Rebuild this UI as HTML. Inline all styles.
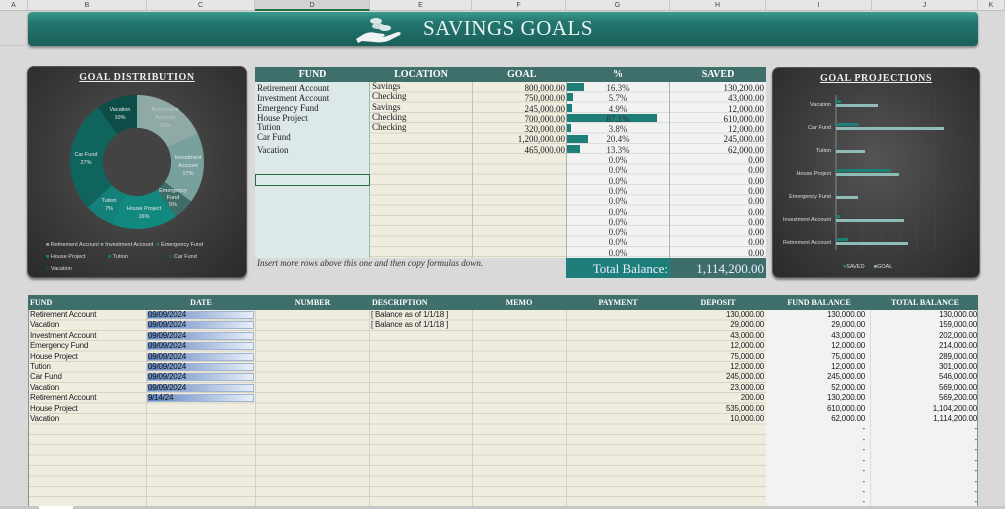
<!DOCTYPE html>
<html><head><meta charset="utf-8"><style>
*{margin:0;padding:0;box-sizing:border-box}
body{width:1005px;height:509px;overflow:hidden;background:#d9d9d9;position:relative;font-family:"Liberation Serif",serif;}
.a{position:absolute}
.hdr{position:absolute;top:0;height:11px;background:#e6e6e6;border-right:1px solid #c8c8c8;border-bottom:1px solid #bdbdbd;font:7px "Liberation Sans",sans-serif;color:#444;text-align:center;line-height:11px}
.col{position:absolute;white-space:pre;font-size:9px;color:#1a1a1a}
.bs{font-family:"Liberation Sans",sans-serif;font-size:8px;letter-spacing:-0.2px}
.th{position:absolute;color:#fff;font-weight:bold;text-align:center}
</style></head><body>
<div class="hdr" style="left:0;width:28px">A</div>
<div class="hdr" style="left:28px;width:119px">B</div>
<div class="hdr" style="left:147px;width:108px">C</div>
<div class="hdr" style="left:255px;width:115px;background:#d2d2d2;border-bottom:2px solid #217346">D</div>
<div class="hdr" style="left:370px;width:102px">E</div>
<div class="hdr" style="left:472px;width:94px">F</div>
<div class="hdr" style="left:566px;width:104px">G</div>
<div class="hdr" style="left:670px;width:96px">H</div>
<div class="hdr" style="left:766px;width:106px">I</div>
<div class="hdr" style="left:872px;width:106px">J</div>
<div class="hdr" style="left:978px;width:27px">K</div>
<div class="a" style="left:0;top:11px;width:28px;height:35px;border-bottom:1px solid #c8c8c8;border-right:1px solid #c8c8c8"></div>

<!-- banner -->
<div class="a" style="left:28px;top:12px;width:950px;height:34px;border-radius:4px;background:linear-gradient(#3a9a90,#22766f 30%,#1b5f59);box-shadow:0 2px 2px #888"></div>
<svg class="a" style="left:354px;top:15px" width="52" height="28" viewBox="0 0 52 28">
<ellipse cx="22" cy="6" rx="6" ry="3" fill="#d8e8e6"/><ellipse cx="24" cy="11" rx="6" ry="3" fill="#c8dcda"/><ellipse cx="31" cy="13" rx="6" ry="3" fill="#d8e8e6"/>
<path d="M2 24 L10 19 Q16 16 22 18 L30 19 Q32 21 28 22 L20 22 L30 22 L44 17 Q48 17 46 20 L34 26 Q28 28 20 27 L8 26 L4 28 Z" fill="#eef4f3"/></svg>
<div class="a" style="left:423px;top:15px;font-size:21px;color:#eaf4f2;letter-spacing:0.5px;line-height:26px">SAVINGS GOALS</div>

<!-- pie panel -->
<div class="a" style="left:27px;top:66px;width:220px;height:212px;border-radius:7px;background:radial-gradient(ellipse at 50% 45%,#555 0%,#3a3a3a 60%,#2a2a2a 100%);box-shadow:0 2px 2px #777;border:1px solid #555"></div>
<div class="a" style="left:27px;top:72px;width:220px;text-align:center;color:#eee;font-weight:bold;font-size:10px;text-decoration:underline;letter-spacing:0.6px">GOAL DISTRIBUTION</div>
<svg class="a" style="left:70px;top:95px" width="134" height="134" viewBox="0 0 134 134">
<g transform="rotate(-90 67 67)" fill="none" stroke-width="33">
<circle cx="67" cy="67" r="50.5" stroke="#8fa9a6" stroke-dasharray="57.1 400" stroke-dashoffset="0"/>
<circle cx="67" cy="67" r="50.5" stroke="#78a19d" stroke-dasharray="53.9 400" stroke-dashoffset="-57.1"/>
<circle cx="67" cy="67" r="50.5" stroke="#3e6d68" stroke-dasharray="15.9 400" stroke-dashoffset="-111"/>
<circle cx="67" cy="67" r="50.5" stroke="#12897f" stroke-dasharray="50.8 400" stroke-dashoffset="-126.9"/>
<circle cx="67" cy="67" r="50.5" stroke="#13807a" stroke-dasharray="22.2 400" stroke-dashoffset="-177.7"/>
<circle cx="67" cy="67" r="50.5" stroke="#0f655e" stroke-dasharray="85.7 400" stroke-dashoffset="-199.9"/>
<circle cx="67" cy="67" r="50.5" stroke="#0c4d48" stroke-dasharray="31.7 400" stroke-dashoffset="-285.6"/>
</g>
<circle cx="67" cy="67" r="34" fill="#434343"/>
<g font-family="Liberation Sans,sans-serif" font-size="5.5" fill="#e8e8e8" text-anchor="middle">
<text x="50" y="16">Vacation</text><text x="50" y="24">10%</text>
<text x="95" y="16" fill="#c0c8c8">Retirement</text><text x="95" y="24" fill="#c0c8c8">Account</text><text x="95" y="32" fill="#c0c8c8">18%</text>
<text x="118" y="64">Investment</text><text x="118" y="72">Account</text><text x="118" y="80">17%</text>
<text x="103" y="97">Emergency</text><text x="103" y="104">Fund</text><text x="103" y="111">5%</text>
<text x="16" y="61">Car Fund</text><text x="16" y="69">27%</text>
<text x="39" y="107">Tution</text><text x="39" y="115">7%</text>
<text x="74" y="115">House Project</text><text x="74" y="123">16%</text></g></svg>
<div class="a" style="left:46px;top:239px;font:5.5px 'Liberation Sans',sans-serif;color:#ddd;line-height:12px;white-space:pre"><span style="color:#8fa9a6">■</span> Retirement Account <span style="color:#78a19d">■</span> Investment Account  <span style="color:#3e6d68">■</span> Emergency Fund</div>
<div class="a" style="left:46px;top:251px;font:5.5px 'Liberation Sans',sans-serif;color:#ddd;line-height:12px"><span style="color:#12897f">■</span> House Project</div>
<div class="a" style="left:108px;top:251px;font:5.5px 'Liberation Sans',sans-serif;color:#ddd;line-height:12px"><span style="color:#13807a">■</span> Tution</div>
<div class="a" style="left:169px;top:251px;font:5.5px 'Liberation Sans',sans-serif;color:#ddd;line-height:12px"><span style="color:#0f655e">■</span> Car Fund</div>
<div class="a" style="left:46px;top:263px;font:5.5px 'Liberation Sans',sans-serif;color:#ddd;line-height:12px"><span style="color:#0c4d48">■</span> Vacation</div>

<!-- top table -->
<div class="a" style="left:255px;top:67px;width:511px;height:191px;border:1px solid #9fb5b2"></div>
<div class="a" style="left:255px;top:82px;width:115px;height:176px;background:#dde9e9"></div>
<div class="a" style="left:370px;top:82px;width:196px;height:176px;background:#efece0 repeating-linear-gradient(#efece0 0 9.3px,#d8d4c4 9.3px 10.3px)"></div>
<div class="a" style="left:566px;top:82px;width:200px;height:176px;background:repeating-linear-gradient(#f2f2f2 0 9.3px,#dcdcdc 9.3px 10.3px)"></div>
<div class="a" style="left:369px;top:82px;width:1px;height:176px;background:#9fb5b2"></div>
<div class="a" style="left:472px;top:82px;width:1px;height:176px;background:#c8c4b4"></div>
<div class="a" style="left:566px;top:82px;width:1px;height:176px;background:#9fb5b2"></div>
<div class="a" style="left:669px;top:82px;width:1px;height:176px;background:#9fb5b2"></div>
<div class="a" style="left:255px;top:174px;width:115px;height:12px;border:1px solid #217346"></div>
<div class="a" style="left:255px;top:67px;width:511px;height:15px;background:#3f6f6a"></div>
<div class="th" style="left:255px;top:69px;width:115px;font-size:10px">FUND</div>
<div class="th" style="left:370px;top:69px;width:102px;font-size:10px">LOCATION</div>
<div class="th" style="left:472px;top:69px;width:94px;font-size:10px;text-align:left;padding-left:35px">GOAL</div>
<div class="th" style="left:566px;top:69px;width:104px;font-size:10px">%</div>
<div class="th" style="left:670px;top:69px;width:96px;font-size:10px">SAVED</div>
<div class="col" style="left:257px;top:83px;line-height:10px">Retirement Account
Investment Account
Emergency Fund
House Project</div>
<div class="col" style="left:257px;top:122px;line-height:10px">Tution
Car Fund</div>
<div class="col" style="left:257px;top:145px">Vacation</div>
<div class="col" style="left:372px;top:81px;line-height:10.3px">Savings
Checking
Savings
Checking
Checking</div>
<div class="col" style="left:472px;top:83px;width:93px;text-align:right;line-height:10.3px">800,000.00
750,000.00
245,000.00
700,000.00
320,000.00
1,200,000.00
465,000.00</div>
<div class="a" style="left:567px;top:83px;width:17px;height:8px;background:#1f7f78"></div>
<div class="a" style="left:567px;top:93px;width:6px;height:8px;background:#1f7f78"></div>
<div class="a" style="left:567px;top:104px;width:5px;height:8px;background:#1f7f78"></div>
<div class="a" style="left:567px;top:114px;width:90px;height:8px;background:#1f7f78"></div>
<div class="a" style="left:567px;top:124px;width:4px;height:8px;background:#1f7f78"></div>
<div class="a" style="left:567px;top:135px;width:21px;height:8px;background:#1f7f78"></div>
<div class="a" style="left:567px;top:145px;width:13px;height:8px;background:#1f7f78"></div>
<div class="col" style="left:566px;top:83px;width:104px;text-align:center;line-height:10.3px;color:#333">16.3%
5.7%
4.9%
87.1%
3.8%
20.4%
13.3%
0.0%
0.0%
0.0%
0.0%
0.0%
0.0%
0.0%
0.0%
0.0%
0.0%</div>
<div class="col" style="left:670px;top:83px;width:94px;text-align:right;line-height:10.3px">130,200.00
43,000.00
12,000.00
610,000.00
12,000.00
245,000.00
62,000.00
0.00
0.00
0.00
0.00
0.00
0.00
0.00
0.00
0.00
0.00</div>
<div class="a" style="left:566px;top:258px;width:104px;height:20px;background:#1e7f7a"></div>
<div class="a" style="left:670px;top:258px;width:96px;height:20px;background:#3e6e69"></div>
<div class="a" style="left:566px;top:259px;width:104px;text-align:right;color:#eef;font-size:13px;line-height:19px;padding-right:2px">Total Balance:</div>
<div class="a" style="left:670px;top:259px;width:94px;text-align:right;color:#eef;font-size:13px;line-height:19px">1,114,200.00</div>
<div class="a" style="left:257px;top:258px;font-size:9px;font-style:italic;color:#333">Insert more rows above this one and then copy formulas down.</div>

<!-- projections panel -->
<div class="a" style="left:772px;top:67px;width:208px;height:211px;border-radius:7px;background:radial-gradient(ellipse at 50% 45%,#555 0%,#3a3a3a 60%,#2a2a2a 100%);box-shadow:0 2px 2px #777;border:1px solid #555"></div>
<div class="a" style="left:772px;top:73px;width:208px;text-align:center;color:#eee;font-weight:bold;font-size:10px;text-decoration:underline;letter-spacing:0.6px">GOAL PROJECTIONS</div>
<svg class="a" style="left:772px;top:90px" width="208" height="165">
<g stroke="#4a4a4a" stroke-width="0.6"><line x1="74" y1="5" x2="74" y2="160"/><line x1="91" y1="5" x2="91" y2="160"/><line x1="109" y1="5" x2="109" y2="160"/><line x1="127" y1="5" x2="127" y2="160"/><line x1="145" y1="5" x2="145" y2="160"/><line x1="163" y1="5" x2="163" y2="160"/></g>
<line x1="64" y1="5" x2="64" y2="160" stroke="#999" stroke-width="0.8"/>
<g fill="#1e7f78"><rect x="64" y="10" width="5" height="3"/><rect x="64" y="33" width="22" height="3"/><rect x="64" y="56" width="1" height="3"/><rect x="64" y="79" width="55" height="3"/><rect x="64" y="102" width="1" height="3"/><rect x="64" y="125" width="4" height="3"/><rect x="64" y="148" width="12" height="3"/></g>
<g fill="#8fbcb7"><rect x="64" y="14" width="42" height="3"/><rect x="64" y="37" width="108" height="3"/><rect x="64" y="60" width="29" height="3"/><rect x="64" y="83" width="63" height="3"/><rect x="64" y="106" width="22" height="3"/><rect x="64" y="129" width="68" height="3"/><rect x="64" y="152" width="72" height="3"/></g>
<g font-family="Liberation Sans,sans-serif" font-size="5.5" fill="#ddd" text-anchor="end">
<text x="59" y="16">Vacation</text><text x="59" y="39">Car Fund</text><text x="59" y="62">Tution</text><text x="59" y="85">House Project</text><text x="59" y="108">Emergency Fund</text><text x="59" y="131">Investment Account</text><text x="59" y="154">Retirement Account</text></g></svg>
<div class="a" style="left:843px;top:264px;font:5.5px 'Liberation Sans',sans-serif;color:#ddd;white-space:pre"><span style="color:#1e7f78">■</span>SAVED      <span style="color:#8fbcb7">■</span>GOAL</div>

<!-- bottom table -->
<div class="a" style="left:28px;top:295px;width:738px;height:214px;background:#efece0 repeating-linear-gradient(#efece0 0 9.4px,#d8d4c4 9.4px 10.4px);background-position:0 15px"></div>
<div class="a" style="left:766px;top:295px;width:212px;height:214px;background:#f2f2f2"></div>
<div class="a" style="left:28px;top:295px;width:950px;height:214px;border-left:1px solid #7a9a96;border-right:1px solid #7a9a96"></div>
<div class="a" style="left:146px;top:310px;width:1px;height:199px;background:#d4d0c2"></div>
<div class="a" style="left:255px;top:310px;width:1px;height:199px;background:#d4d0c2"></div>
<div class="a" style="left:369px;top:310px;width:1px;height:199px;background:#d4d0c2"></div>
<div class="a" style="left:472px;top:310px;width:1px;height:199px;background:#d4d0c2"></div>
<div class="a" style="left:566px;top:310px;width:1px;height:199px;background:#d4d0c2"></div>
<div class="a" style="left:870px;top:310px;width:1px;height:199px;background:#dcdcdc"></div>
<div class="a" style="left:28px;top:295px;width:950px;height:15px;background:#3f6f6a"></div>
<div class="th" style="left:30px;top:298px;font-size:8px">FUND</div>
<div class="th" style="left:147px;top:298px;width:108px;font-size:8px">DATE</div>
<div class="th" style="left:255px;top:298px;width:115px;font-size:8px">NUMBER</div>
<div class="th" style="left:372px;top:298px;font-size:8px">DESCRIPTION</div>
<div class="th" style="left:472px;top:298px;width:94px;font-size:8px">MEMO</div>
<div class="th" style="left:566px;top:298px;width:104px;font-size:8px">PAYMENT</div>
<div class="th" style="left:670px;top:298px;width:96px;font-size:8px">DEPOSIT</div>
<div class="th" style="left:766px;top:298px;width:106px;font-size:8px">FUND BALANCE</div>
<div class="th" style="left:872px;top:298px;width:106px;font-size:8px">TOTAL BALANCE</div>
<div class="a" style="left:147px;top:311px;width:107px;height:8px;background:linear-gradient(90deg,#5f86c2,#e8eef8);border:1px solid #9fb4d4"></div>
<div class="a" style="left:147px;top:321.4px;width:107px;height:8px;background:linear-gradient(90deg,#5f86c2,#e8eef8);border:1px solid #9fb4d4"></div>
<div class="a" style="left:147px;top:331.8px;width:107px;height:8px;background:linear-gradient(90deg,#5f86c2,#e8eef8);border:1px solid #9fb4d4"></div>
<div class="a" style="left:147px;top:342.2px;width:107px;height:8px;background:linear-gradient(90deg,#5f86c2,#e8eef8);border:1px solid #9fb4d4"></div>
<div class="a" style="left:147px;top:352.6px;width:107px;height:8px;background:linear-gradient(90deg,#5f86c2,#e8eef8);border:1px solid #9fb4d4"></div>
<div class="a" style="left:147px;top:363px;width:107px;height:8px;background:linear-gradient(90deg,#5f86c2,#e8eef8);border:1px solid #9fb4d4"></div>
<div class="a" style="left:147px;top:373.4px;width:107px;height:8px;background:linear-gradient(90deg,#5f86c2,#e8eef8);border:1px solid #9fb4d4"></div>
<div class="a" style="left:147px;top:383.8px;width:107px;height:8px;background:linear-gradient(90deg,#5f86c2,#e8eef8);border:1px solid #9fb4d4"></div>
<div class="a" style="left:147px;top:394.2px;width:107px;height:8px;background:linear-gradient(90deg,#5f86c2,#e8eef8);border:1px solid #9fb4d4"></div>
<div class="col bs" style="left:30px;top:310px;line-height:10.4px">Retirement Account
Vacation
Investment Account
Emergency Fund
House Project
Tution
Car Fund
Vacation
Retirement Account
House Project
Vacation</div>
<div class="col bs" style="left:148px;top:310px;line-height:10.4px;color:#111">09/09/2024
09/09/2024
09/09/2024
09/09/2024
09/09/2024
09/09/2024
09/09/2024
09/09/2024
9/14/24</div>
<div class="col bs" style="left:371px;top:310px;line-height:10.4px">[ Balance as of 1/1/18 ]
[ Balance as of 1/1/18 ]</div>
<div class="col bs" style="left:670px;top:310px;width:94px;text-align:right;line-height:10.4px">130,000.00
29,000.00
43,000.00
12,000.00
75,000.00
12,000.00
245,000.00
23,000.00
200.00
535,000.00
10,000.00</div>
<div class="col bs" style="left:766px;top:310px;width:99px;text-align:right;line-height:10.4px">130,000.00
29,000.00
43,000.00
12,000.00
75,000.00
12,000.00
245,000.00
52,000.00
130,200.00
610,000.00
62,000.00
-
-
-
-
-
-
-
-</div>
<div class="col bs" style="left:872px;top:310px;width:105px;text-align:right;line-height:10.4px">130,000.00
159,000.00
202,000.00
214,000.00
289,000.00
301,000.00
546,000.00
569,000.00
569,200.00
1,104,200.00
1,114,200.00
-
-
-
-
-
-
-
-</div>
<div class="a" style="left:0;top:506px;width:1005px;height:3px;background:#c8c8c8"></div>
<div class="a" style="left:39px;top:506px;width:34px;height:3px;background:#fff"></div>
</body></html>
